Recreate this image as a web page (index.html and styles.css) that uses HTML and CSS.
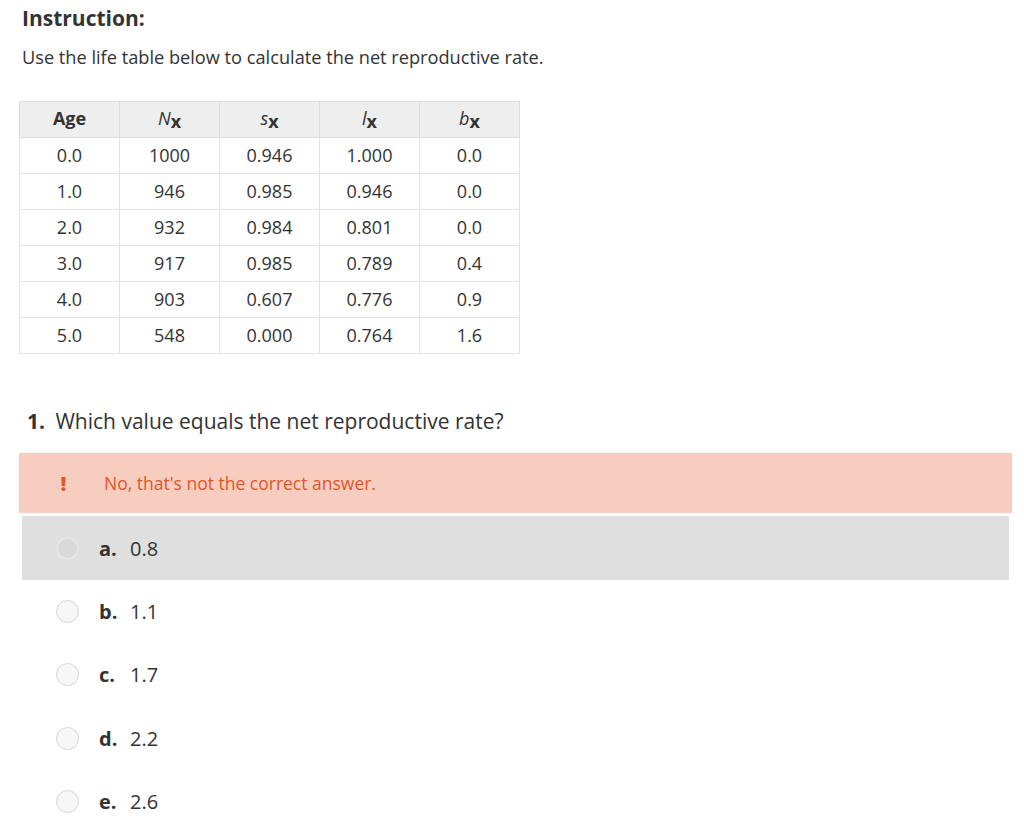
FILE: index.html
```html
<!DOCTYPE html>
<html>
<head>
<meta charset="utf-8">
<link rel="stylesheet" href="styles.css">
</head>
<body>
<div class="page">
  <h1 class="title">Instruction:</h1>
  <p class="intro">Use the life table below to calculate the net reproductive rate.</p>
  <table class="life">
    <thead>
      <tr>
        <th class="age">Age</th>
        <th><i>N</i><b class="sub">x</b></th>
        <th><i>s</i><b class="sub">x</b></th>
        <th><i>l</i><b class="sub">x</b></th>
        <th><i>b</i><b class="sub">x</b></th>
      </tr>
    </thead>
    <tbody>
      <tr><td>0.0</td><td>1000</td><td>0.946</td><td>1.000</td><td>0.0</td></tr>
      <tr><td>1.0</td><td>946</td><td>0.985</td><td>0.946</td><td>0.0</td></tr>
      <tr><td>2.0</td><td>932</td><td>0.984</td><td>0.801</td><td>0.0</td></tr>
      <tr><td>3.0</td><td>917</td><td>0.985</td><td>0.789</td><td>0.4</td></tr>
      <tr><td>4.0</td><td>903</td><td>0.607</td><td>0.776</td><td>0.9</td></tr>
      <tr><td>5.0</td><td>548</td><td>0.000</td><td>0.764</td><td>1.6</td></tr>
    </tbody>
  </table>
  <h2 class="question"><b>1.</b> Which value equals the net reproductive rate?</h2>
  <div class="feedback"><span class="bang">!</span><span class="msg">No, that's not the correct answer.</span></div>
  <ul class="options">
    <li class="option selected"><span class="radio"></span><b class="letter">a.</b><span class="val">0.8</span></li>
    <li class="option"><span class="radio"></span><b class="letter">b.</b><span class="val">1.1</span></li>
    <li class="option"><span class="radio"></span><b class="letter">c.</b><span class="val">1.7</span></li>
    <li class="option"><span class="radio"></span><b class="letter">d.</b><span class="val">2.2</span></li>
    <li class="option"><span class="radio"></span><b class="letter">e.</b><span class="val">2.6</span></li>
  </ul>
</div>
</body>
</html>
```

FILE: styles.css
```css
* { box-sizing: border-box; }
html, body { margin: 0; padding: 0; background: #fff; }
body {
  font-family: "Open Sans", "Liberation Sans", sans-serif;
  color: #333;
}
.page {
  padding: 5px 12px 0 19px;
}
.title {
  margin: 0 0 0 3px;
  font-size: 21px;
  line-height: 26px;
  font-weight: 700;
  color: #333;
}
.intro {
  margin: 13px 0 0 3px;
  font-size: 18.2px;
  line-height: 26px;
}
.life {
  margin-top: 31px;
  border-collapse: collapse;
  font-size: 18px;
}
.life th, .life td {
  width: 100px;
  height: 36px;
  padding: 0 0 1px;
  text-align: center;
  vertical-align: middle;
  border: 1px solid #e3e3e3;
  font-weight: 400;
}
.life th {
  background: #eeeeee;
  border-color: #dcdcdc;
  padding-bottom: 4px;
}
.life th.age { font-weight: 700; }
.life th i { font-style: italic; }
.life th .sub {
  font-weight: 700;
  position: relative;
  top: 3px;
}
.question {
  margin: 52px 0 0 8px;
  font-size: 21px;
  line-height: 30px;
  font-weight: 400;
}
.question b { margin-right: 5px; }
.feedback {
  margin-top: 17px;
  width: 993px;
  height: 60px;
  background: #f7cdbf;
  display: flex;
  align-items: center;
  font-size: 17.5px;
  color: #e0562b;
}
.bang {
  font-weight: 800;
  font-size: 20px;
  width: 85px;
  text-align: center;
  padding-left: 4px;
}
.options {
  list-style: none;
  margin: 3px 0 0 3px;
  padding: 0;
  width: 987px;
}
.option {
  display: flex;
  align-items: center;
  height: 63.3px;
  font-size: 20px;
}
.option.selected {
  background: #dfdfdf;
  height: 64px;
}
.radio {
  width: 23px;
  height: 23px;
  border-radius: 50%;
  border: 1px solid #d6d6d6;
  background: #f7f7f7;
  margin-left: 34px;
  margin-right: 20px;
}
.selected .radio {
  background: #d9d9d9;
  border: 2px solid #e6e6e6;
}
.letter {
  font-weight: 700;
  width: 31px;
}
```
